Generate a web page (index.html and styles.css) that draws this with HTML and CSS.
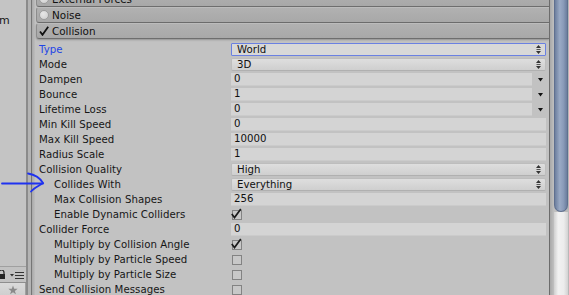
FILE: index.html
```html
<!DOCTYPE html>
<html>
<head>
<meta charset="utf-8">
<link rel="stylesheet" href="styles.css">
</head>
<body>
<div class="window">
  <aside class="left">
    <div class="list"><span class="clip">m</span></div>
    <div class="toolbar">
      <svg class="lock" width="6" height="9" viewBox="0 0 6 9"><path d="M-1 4 V2.5 A2.5 2.5 0 0 1 4 2.5 V4" fill="none" stroke="#222" stroke-width="1.2"/><rect x="-3" y="4" width="8" height="5" fill="#222"/></svg>
      <svg class="menu" width="14" height="8" viewBox="0 0 14 8"><path d="M0 3 H4 L2 5.5 Z" fill="#333"/><path d="M5 1.5 H14 M5 4.5 H14 M5 7.5 H14" stroke="#333" stroke-width="1.2"/></svg>
    </div>
    <div class="starbar"><div class="starbtn"><svg width="10" height="10" viewBox="0 0 10 10"><path d="M5 0.5 L6.2 3.7 L9.6 3.8 L6.9 5.9 L7.9 9.3 L5 7.3 L2.1 9.3 L3.1 5.9 L0.4 3.8 L3.8 3.7 Z" fill="#8a8a8a"/></svg></div></div>
  </aside>
  <div class="divider"></div>
  <main class="inspector">
    <div class="headers">
      <div class="module-header"><span class="toggle"></span><span class="title">External Forces</span></div>
      <div class="module-header"><span class="toggle"></span><span class="title">Noise</span></div>
      <div class="module-header open"><svg class="hcheck" width="10" height="10" viewBox="0 0 10 10"><path d="M1 5.5 L3.5 8.8 L9.2 0.8" fill="none" stroke="#111" stroke-width="1.8"/></svg><span class="title">Collision</span></div>
    </div>
    <div class="props">
      <div class="row"><span class="label focus">Type</span><div class="value"><div class="popup focused">World<svg class="updown" width="5" height="9" viewBox="0 0 5 9"><path d="M2.5 0 L5 3 H0 Z M2.5 9 L5 6 H0 Z" fill="#333"/><path d="M0.5 4.5 H4.5" stroke="#555" stroke-width="1"/></svg></div></div></div>
      <div class="row"><span class="label">Mode</span><div class="value"><div class="popup">3D<svg class="updown" width="5" height="9" viewBox="0 0 5 9"><path d="M2.5 0 L5 3 H0 Z M2.5 9 L5 6 H0 Z" fill="#333"/><path d="M0.5 4.5 H4.5" stroke="#555" stroke-width="1"/></svg></div></div></div>
      <div class="row"><span class="label">Dampen</span><div class="value curve"><div class="field">0</div><svg class="down" width="5" height="4" viewBox="0 0 5 4"><path d="M0 0 H5 L2.5 3.5 Z" fill="#111"/></svg></div></div>
      <div class="row"><span class="label">Bounce</span><div class="value curve"><div class="field">1</div><svg class="down" width="5" height="4" viewBox="0 0 5 4"><path d="M0 0 H5 L2.5 3.5 Z" fill="#111"/></svg></div></div>
      <div class="row"><span class="label">Lifetime Loss</span><div class="value curve"><div class="field">0</div><svg class="down" width="5" height="4" viewBox="0 0 5 4"><path d="M0 0 H5 L2.5 3.5 Z" fill="#111"/></svg></div></div>
      <div class="row"><span class="label">Min Kill Speed</span><div class="value"><div class="field">0</div></div></div>
      <div class="row"><span class="label">Max Kill Speed</span><div class="value"><div class="field">10000</div></div></div>
      <div class="row"><span class="label">Radius Scale</span><div class="value"><div class="field">1</div></div></div>
      <div class="row"><span class="label">Collision Quality</span><div class="value"><div class="popup">High<svg class="updown" width="5" height="9" viewBox="0 0 5 9"><path d="M2.5 0 L5 3 H0 Z M2.5 9 L5 6 H0 Z" fill="#333"/><path d="M0.5 4.5 H4.5" stroke="#555" stroke-width="1"/></svg></div></div></div>
      <div class="row"><span class="label sub">Collides With</span><div class="value"><div class="popup">Everything<svg class="updown" width="5" height="9" viewBox="0 0 5 9"><path d="M2.5 0 L5 3 H0 Z M2.5 9 L5 6 H0 Z" fill="#333"/><path d="M0.5 4.5 H4.5" stroke="#555" stroke-width="1"/></svg></div></div></div>
      <div class="row"><span class="label sub">Max Collision Shapes</span><div class="value"><div class="field">256</div></div></div>
      <div class="row"><span class="label sub">Enable Dynamic Colliders</span><div class="value"><span class="checkbox"><svg class="tick" width="11" height="11" viewBox="0 0 11 11"><path d="M0.8 6 L3.5 9.5 L9.8 1" fill="none" stroke="#1a1a1a" stroke-width="1.7"/></svg></span></div></div>
      <div class="row"><span class="label">Collider Force</span><div class="value"><div class="field">0</div></div></div>
      <div class="row"><span class="label sub">Multiply by Collision Angle</span><div class="value"><span class="checkbox"><svg class="tick" width="11" height="11" viewBox="0 0 11 11"><path d="M0.8 6 L3.5 9.5 L9.8 1" fill="none" stroke="#1a1a1a" stroke-width="1.7"/></svg></span></div></div>
      <div class="row"><span class="label sub">Multiply by Particle Speed</span><div class="value"><span class="checkbox"></span></div></div>
      <div class="row"><span class="label sub">Multiply by Particle Size</span><div class="value"><span class="checkbox"></span></div></div>
      <div class="row"><span class="label">Send Collision Messages</span><div class="value"><span class="checkbox"></span></div></div>
    </div>
  </main>
  <div class="scrollbar"><div class="thumb"></div><div class="track"></div></div>
  <svg class="annotation" width="46" height="24" viewBox="0 0 46 24"><path d="M1 11.5 H42" fill="none" stroke="#1f32f0" stroke-width="1.8" stroke-linecap="round"/><path d="M27 1.5 C33 2.5 39 6 42 11 C38 14 33 16 30 19.5" fill="none" stroke="#1f32f0" stroke-width="1.8" stroke-linecap="round"/></svg>
</div>
</body>
</html>
```

FILE: styles.css
```css
* { box-sizing: border-box; }
html, body { margin: 0; padding: 0; }
body {
  width: 569px;
  height: 295px;
  overflow: hidden;
  background: #c2c2c2;
  font-family: "DejaVu Sans", "Liberation Sans", sans-serif;
  font-size: 10.2px;
  color: #161616;
}
.window {
  position: relative;
  display: flex;
  width: 569px;
  height: 295px;
  overflow: hidden;
}
.left {
  width: 26px;
  display: flex;
  flex-direction: column;
  background: #c2c2c2;
}
.list {
  height: 267px;
  background: #c4c4c4;
  border-bottom: 1px solid #a0a0a0;
  padding-top: 15px;
  font-size: 11px;
  line-height: 12px;
  overflow: hidden;
  white-space: nowrap;
}
.clip { margin-left: -1px; }
.toolbar {
  height: 16px;
  display: flex;
  align-items: center;
  gap: 4px;
  border-bottom: 1px solid #8e8e8e;
}
.lock { margin-left: 0; }
.starbar { flex: 1; }
.starbtn {
  height: 100%;
  width: 26px;
  background: linear-gradient(#dadada, #cfcfcf);
  border-right: 1px solid #a0a0a0;
  display: flex;
  justify-content: center;
  padding-top: 2px;
}
.divider {
  width: 9px;
  background: linear-gradient(to right, #8b8b8b 0, #8b8b8b 2px, #b4b4b4 2px, #b4b4b4 5px, #767676 5px, #767676 6px, #a9a9a9 6px, #bdbdbd 9px);
}
.inspector {
  width: 514px;
  display: flex;
  flex-direction: column;
}
.headers {
  margin-top: -9px;
  margin-left: 1px;
}
.module-header {
  height: 16px;
  display: flex;
  align-items: center;
  padding-left: 2px;
  background: linear-gradient(#b1b1b1, #a8a8a8);
  border-left: 1px solid #8c8c8c;
  border-bottom: 1px solid #6e6e6e;
  border-top: 1px solid #bcbcbc;
  border-radius: 3px 0 0 3px;
  color: #111;
  font-size: 10.4px;
}
.module-header.open {
  box-shadow: 0 1px 2px rgba(0,0,0,0.25);
  padding-left: 3px;
}
.toggle {
  width: 10px;
  height: 10px;
  border-radius: 50%;
  background: radial-gradient(circle at 40% 35%, #e6e6e6, #cdcdcd);
  border: 1px solid #9c9c9c;
  margin-right: 3px;
}
.hcheck { margin-left: -1px; margin-right: 3px; margin-top: -1px; }
.props {
  margin-top: 3px;
  display: flex;
  flex-direction: column;
}
.row {
  height: 15px;
  display: grid;
  grid-template-columns: 196px 1fr;
  align-items: center;
  padding-right: 3px;
}
.label {
  padding-left: 4px;
  white-space: nowrap;
  line-height: 15px;
  letter-spacing: 0.05px;
}
.label.sub { padding-left: 19px; }
.label.focus { color: #1e44e6; }
.value {
  height: 15px;
  display: flex;
  align-items: center;
}
.field {
  flex: 1;
  height: 13px;
  background: #d4d4d4;
  border-bottom: 1px solid #cbcbcb;
  padding-left: 3px;
  line-height: 12px;
  color: #111;
}
.value.curve .field { flex: 0 0 301px; }
.down { margin-left: 6px; }
.popup {
  flex: 1;
  height: 13px;
  display: flex;
  align-items: center;
  justify-content: space-between;
  padding: 0 4px 0 5px;
  background: linear-gradient(#dedede, #cfcfcf);
  border: 1px solid #bdbdbd;
  border-bottom-color: #b0b0b0;
  border-radius: 2px;
  color: #111;
  line-height: 11px;
}
.popup.focused {
  border: 1px solid #6a80e2;
  background: #d8d8d8;
  border-radius: 1px;
}
.checkbox {
  position: relative;
  width: 10px;
  height: 10px;
  margin-left: 1px;
  border: 1px solid #838383;
  background: #c8c8c8;
}
.tick {
  position: absolute;
  left: -2px;
  top: -3px;
}
.scrollbar {
  width: 20px;
  display: flex;
  flex-direction: column;
  border-left: 1px solid #6c6c6c;
  padding-left: 4px;
  padding-right: 1px;
  background: linear-gradient(to right, #a8a8a8, #c0c0c0 4px, #b8b8b8);
}
.thumb {
  height: 222px;
  margin-top: -10px;
  border-radius: 0 0 7px 7px;
  background: linear-gradient(to right, #6d7f9e, #9aaac5 40%, #8a9bb9 70%, #6c7e9d);
  border: 1px solid #5f7090;
  border-top: none;
}
.track {
  flex: 1;
  background: linear-gradient(to right, #cfcfcf, #f1f1f1 30%, #ececec 70%, #d2d2d2);
}
.annotation {
  position: absolute;
  left: 1px;
  top: 172px;
}
```
